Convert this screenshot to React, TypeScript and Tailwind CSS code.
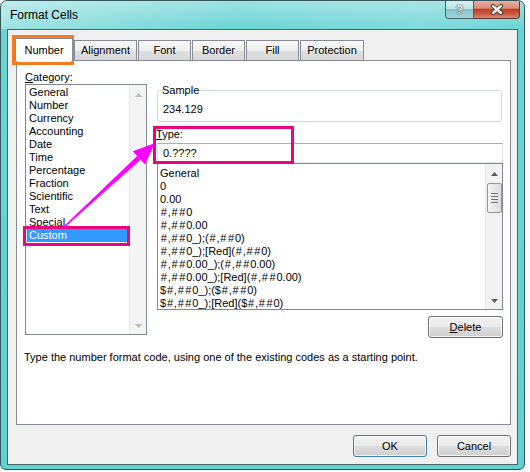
import React from 'react';

const categories = [
  'General',
  'Number',
  'Currency',
  'Accounting',
  'Date',
  'Time',
  'Percentage',
  'Fraction',
  'Scientific',
  'Text',
  'Special',
  'Custom',
];

const formats = [
  'General',
  '0',
  '0.00',
  '#,##0',
  '#,##0.00',
  '#,##0_);(#,##0)',
  '#,##0_);[Red](#,##0)',
  '#,##0.00_);(#,##0.00)',
  '#,##0.00_);[Red](#,##0.00)',
  '$#,##0_);($#,##0)',
  '$#,##0_);[Red]($#,##0)',
];

function FormatText({ text }: { text: string }) {
  const chars = text.split(/(#)/).filter((p) => p.length > 0);
  return (
    <>
      {chars.map((p, i) =>
        p === '#' ? (
          <span key={i} className="inline-block w-[7.7px] text-center">
            #
          </span>
        ) : (
          <span key={i}>{p}</span>
        )
      )}
    </>
  );
}

function ScrollArrow({ dir, disabled }: { dir: 'up' | 'down'; disabled?: boolean }) {
  return (
    <svg width="7" height="4" viewBox="0 0 7 4" className="block">
      <path
        d={dir === 'up' ? 'M0 4 L3.5 0 L7 4 Z' : 'M0 0 L3.5 4 L7 0 Z'}
        fill={disabled ? '#bcbcbc' : '#5a5a5a'}
      />
    </svg>
  );
}

const btnClass =
  'h-[22px] rounded-[3px] border text-[11px] leading-[13px] text-black flex items-center justify-center bg-[linear-gradient(to_bottom,#f2f2f2_0%,#ebebeb_50%,#dddddd_51%,#cfcfcf_100%)] shadow-[inset_0_0_0_1px_rgba(255,255,255,0.75)]';

const tabClass =
  'h-[20px] border border-b-0 border-[#898c95] text-[11px] leading-[13px] text-black flex items-center justify-center bg-[linear-gradient(to_bottom,#f8f8f8_0%,#eeeeee_50%,#e0e0e0_51%,#d8d8d8_100%)]';

export default function App() {
  return (
    <div className="relative w-[530px] h-[472px] bg-white overflow-hidden font-[family-name:Liberation_Sans,Arial,sans-serif] text-black">
      {/* Window */}
      <div className="w-[525px] h-[470px] rounded-t-[7px] rounded-b-[6px] border border-[#33575b] bg-[linear-gradient(to_bottom,#9fe2e2_0px,#6ad4d4_28px,#62d1d1_100%)] flex flex-col overflow-hidden">
        {/* Title bar */}
        <div className="h-[28px] flex items-center bg-[linear-gradient(to_right,rgba(255,255,255,0.35),rgba(255,255,255,0)_45%,rgba(255,255,255,0.12)_80%,rgba(255,255,255,0))]">
          <span className="pl-[9px] text-[12px] leading-[14px] text-black">Format Cells</span>
          <div className="ml-auto mr-[4px] self-start flex">
            <div className="w-[29px] h-[18px] border border-t-0 border-[#45666a] rounded-bl-[4px] bg-[linear-gradient(to_bottom,#d7f0f0_0%,#bfe5e5_45%,#86c5c7_50%,#9fd5d6_100%)] flex items-center justify-center">
              <span className="text-[13px] leading-[13px] font-bold text-white [text-shadow:0_0_1px_#2c3e40,0_0_1px_#2c3e40,0_0_1px_#2c3e40]">
                ?
              </span>
            </div>
            <div className="w-[46px] h-[18px] border border-t-0 border-l-0 border-[#5a3a34] rounded-br-[4px] bg-[linear-gradient(to_bottom,#e9ae9f_0%,#dc8d79_42%,#c0412a_50%,#c9533a_72%,#dd8a74_100%)] flex items-center justify-center">
              <svg width="14" height="11" viewBox="0 0 14 11">
                <path d="M3 2 L11 9 M11 2 L3 9" stroke="#3b2b28" strokeWidth="4.2" strokeLinecap="round" />
                <path d="M3 2 L11 9 M11 2 L3 9" stroke="#ffffff" strokeWidth="2.4" strokeLinecap="round" />
              </svg>
            </div>
          </div>
        </div>

        {/* Client area */}
        <div className="mx-[6px] mb-[4px] flex-1 border border-[#46666a] bg-[#f0f0f0] flex flex-col pt-[8px]">
          {/* Tabs */}
          <div className="ml-[7px] h-[22px] flex items-end gap-[1px]">
            <div className="relative z-10 -mb-px w-[58px] h-[23px] border border-b-0 border-[#898c95] bg-white text-[11px] leading-[13px] flex items-center justify-center">
              Number
            </div>
            <div className={`${tabClass} w-[63px]`}>Alignment</div>
            <div className={`${tabClass} w-[53px]`}>Font</div>
            <div className={`${tabClass} w-[53px]`}>Border</div>
            <div className={`${tabClass} w-[53px]`}>Fill</div>
            <div className={`${tabClass} w-[64px]`}>Protection</div>
          </div>

          {/* Tab panel */}
          <div className="ml-[8px] w-[495px] h-[365px] border border-[#898c95] bg-white pl-[8px] pt-[9px] flex flex-col text-[11px] leading-[13px]">
            <div className="h-[14px] leading-[14px]">
              <span className="underline">C</span>ategory:
            </div>
            <div className="flex gap-[10px]">
              {/* Category list */}
              <div className="w-[122px] h-[251px] border border-[#828790] flex">
                <div className="flex-1 pl-[1px] pt-[1px] flex flex-col overflow-hidden">
                  {categories.map((c) => (
                    <div
                      key={c}
                      className={
                        c === 'Custom'
                          ? 'h-[13px] px-[2px] leading-[13px] bg-[#3399ff] text-white whitespace-nowrap'
                          : 'h-[13px] px-[2px] leading-[13px] whitespace-nowrap'
                      }
                    >
                      {c}
                    </div>
                  ))}
                </div>
                <div className="w-[17px] bg-[#f4f4f4] border-l border-[#e6e6e6] flex flex-col items-center justify-between pt-[8px] pb-[6px]">
                  <ScrollArrow dir="up" disabled />
                  <ScrollArrow dir="down" disabled />
                </div>
              </div>

              {/* Right column */}
              <div className="w-[346px] flex flex-col">
                <div className="mt-[6px] w-[345px] h-[32px] border border-[#d0d9df] rounded-[3px] flex flex-col">
                  <div className="-mt-[7px] ml-[3px] px-[1px] w-fit bg-white leading-[13px]">Sample</div>
                  <div className="mt-[6px] pl-[5px] leading-[13px]">234.129</div>
                </div>
                <div className="mt-[6px] h-[13px] leading-[13px] -ml-px">
                  <span className="underline">T</span>ype:
                </div>
                <div className="mt-[2px] h-[20px] border border-[#abadb3] border-b-[#e3e9ef] border-l-[#e2e3ea] border-r-[#dbdfe6] flex items-center pl-[5px]">
                  0.????
                </div>
                <div className="h-[147px] border border-[#828790] flex">
                  <div className="flex-1 pl-[2px] pt-[3px] flex flex-col overflow-hidden">
                    {formats.map((f) => (
                      <div key={f} className="h-[13px] shrink-0 leading-[13px] whitespace-nowrap">
                        <FormatText text={f} />
                      </div>
                    ))}
                  </div>
                  <div className="w-[17px] bg-[#f2f2f2] border-l border-[#e8e8e8] flex flex-col items-center pt-[8px] pb-[6px]">
                    <ScrollArrow dir="up" />
                    <div className="mt-[7px] w-[15px] h-[30px] rounded-[2px] border border-[#979797] bg-[linear-gradient(to_right,#f6f6f6,#e8e8e8_50%,#dcdcdc)] flex flex-col items-center justify-center gap-[2px]">
                      <div className="w-[7px] h-px bg-[#6f6f6f]" />
                      <div className="w-[7px] h-px bg-[#6f6f6f]" />
                      <div className="w-[7px] h-px bg-[#6f6f6f]" />
                      <div className="w-[7px] h-px bg-[#6f6f6f]" />
                    </div>
                    <div className="flex-1" />
                    <ScrollArrow dir="down" />
                  </div>
                </div>
                <div className="mt-[6px] self-end">
                  <div className={`${btnClass} w-[75px] border-[#707070]`}>
                    <span>
                      <span className="underline">D</span>elete
                    </span>
                  </div>
                </div>
              </div>
            </div>
            <div className="mt-[13px] -ml-px leading-[13px] whitespace-nowrap">
              Type the number format code, using one of the existing codes as a starting point.
            </div>
          </div>

          {/* Dialog buttons */}
          <div className="mt-[10px] mr-[6px] flex justify-end gap-[10px]">
            <div className={`${btnClass} w-[74px] border-[#3c7fb1] shadow-[inset_0_0_0_1px_rgba(190,230,253,0.9)]`}>OK</div>
            <div className={`${btnClass} w-[74px] border-[#707070]`}>Cancel</div>
          </div>
        </div>
      </div>

      {/* Annotation overlays */}
      <div className="absolute left-[12px] top-[35px] w-[62px] h-[30px] border-[3px] border-[#f47b20] pointer-events-none" />
      <div className="absolute left-[23px] top-[226px] w-[107px] h-[20px] border-[3px] border-[#e8067f] pointer-events-none" />
      <div className="absolute left-[153px] top-[126px] w-[141px] h-[38px] border-[3px] border-[#e8067f] pointer-events-none" />
      <svg className="absolute left-0 top-0 pointer-events-none" width="530" height="472" viewBox="0 0 530 472">
        <polygon points="62.5,227.5 63.5,228.5 140.6,159.7 137.2,156.1" fill="#ff00ff" />
        <polygon points="155,143 145,164.5 132.8,151.3" fill="#ff00ff" />
      </svg>
    </div>
  );
}
